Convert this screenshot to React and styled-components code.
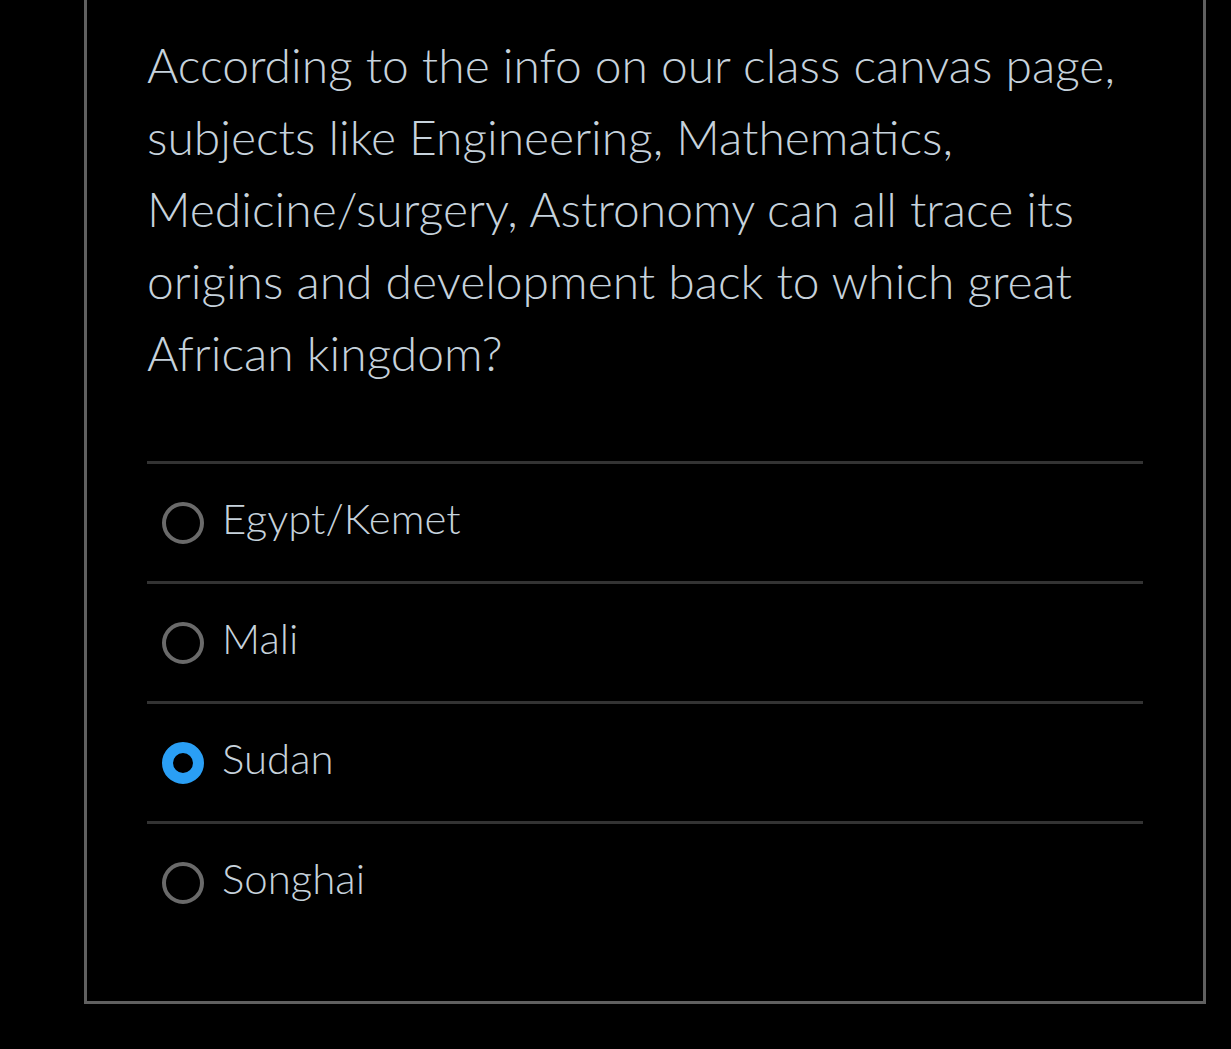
import { useState } from "react";
import styled, { createGlobalStyle } from "styled-components";

const options = ["Egypt/Kemet", "Mali", "Sudan", "Songhai"];

export default function App() {
  const [picked, setPicked] = useState("Sudan");

  return (
    <>
      <GlobalStyle />
      <Card>
        <Question>
          According to the info on our class canvas page, subjects like
          Engineering, Mathematics, Medicine/surgery, Astronomy can all trace
          its origins and development back to which great African kingdom?
        </Question>
        <Answers>
          {options.map((opt) => (
            <Answer key={opt}>
              <Radio
                type="radio"
                name="kingdom"
                checked={picked === opt}
                onChange={() => setPicked(opt)}
              />
              <AnswerText>{opt}</AnswerText>
            </Answer>
          ))}
        </Answers>
      </Card>
    </>
  );
}

const GlobalStyle = createGlobalStyle`
  html, body {
    margin: 0;
    background: #000;
  }
  body {
    font-family: "Lato Light", Lato, "Open Sans", sans-serif;
  }
`;

const Card = styled.div`
  box-sizing: border-box;
  width: 1122px;
  margin-left: 84px;
  padding: 29px 60px 60px;
  border: 3px solid #606060;
  border-top: none;
  background: #000;
`;

const Question = styled.p`
  margin: 0 0 72px;
  font-size: 48px;
  font-weight: 300;
  line-height: 72px;
  color: #c6d2dc;
`;

const Answers = styled.div`
  display: flex;
  flex-direction: column;
`;

const Answer = styled.label`
  display: flex;
  align-items: center;
  gap: 18px;
  height: 117px;
  padding-left: 15px;
  border-top: 3px solid #333;
  cursor: pointer;
`;

const Radio = styled.input`
  appearance: none;
  box-sizing: border-box;
  width: 42px;
  height: 42px;
  margin: 0;
  border-radius: 50%;
  border: 4px solid #6a6a6a;
  background: #000;
  flex-shrink: 0;
  cursor: pointer;

  &:checked {
    border: 11px solid #2a9ff5;
  }
`;

const AnswerText = styled.span`
  margin-bottom: 9px;
  font-size: 42px;
  font-weight: 300;
  color: #c6d2dc;
`;
